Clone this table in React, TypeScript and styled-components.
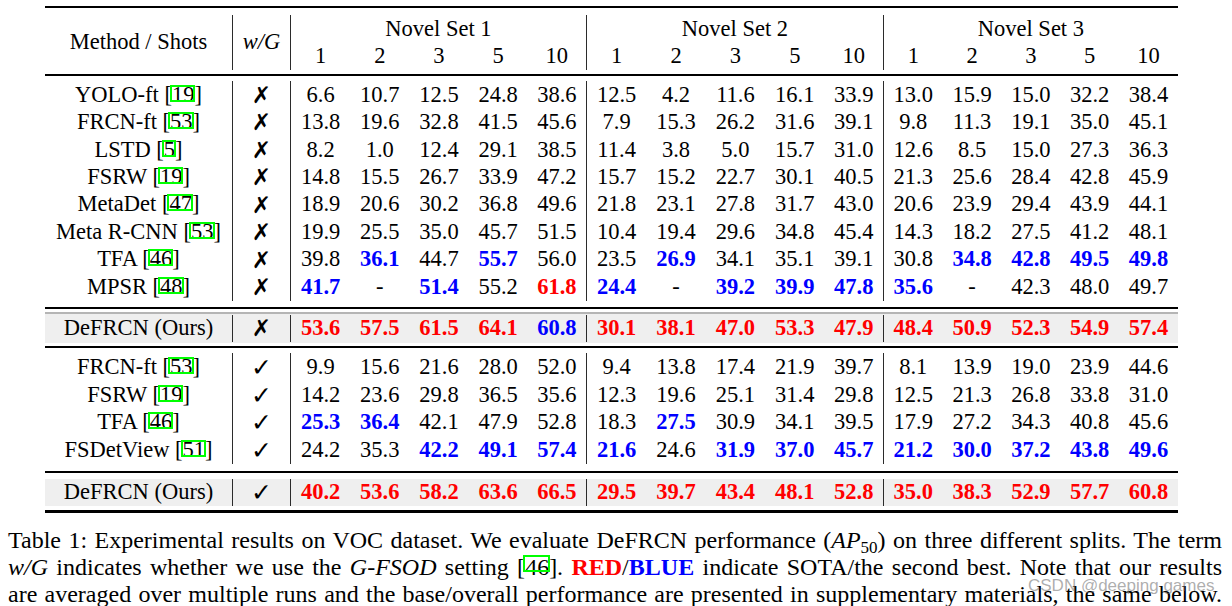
import React from 'react';
import styled, {createGlobalStyle} from 'styled-components';

// column widths measured off the reference (method, w/G, 3 x 5 shot columns)
const COLS = '188px 58px repeat(5, 59.2px) repeat(5, 59.4px) repeat(5, 58.8px)';
const SEP_AFTER = [0, 1, 6, 11];

type Row = {
    name: string;
    cite?: string;
    g: boolean;
    v: string[];
};

// values: leading "r" = best (red), "b" = second best (blue)
const group1: Row[] = [
    {name: 'YOLO-ft', cite: '19', g: false, v: ['6.6', '10.7', '12.5', '24.8', '38.6', '12.5', '4.2', '11.6', '16.1', '33.9', '13.0', '15.9', '15.0', '32.2', '38.4']},
    {name: 'FRCN-ft', cite: '53', g: false, v: ['13.8', '19.6', '32.8', '41.5', '45.6', '7.9', '15.3', '26.2', '31.6', '39.1', '9.8', '11.3', '19.1', '35.0', '45.1']},
    {name: 'LSTD', cite: '5', g: false, v: ['8.2', '1.0', '12.4', '29.1', '38.5', '11.4', '3.8', '5.0', '15.7', '31.0', '12.6', '8.5', '15.0', '27.3', '36.3']},
    {name: 'FSRW', cite: '19', g: false, v: ['14.8', '15.5', '26.7', '33.9', '47.2', '15.7', '15.2', '22.7', '30.1', '40.5', '21.3', '25.6', '28.4', '42.8', '45.9']},
    {name: 'MetaDet', cite: '47', g: false, v: ['18.9', '20.6', '30.2', '36.8', '49.6', '21.8', '23.1', '27.8', '31.7', '43.0', '20.6', '23.9', '29.4', '43.9', '44.1']},
    {name: 'Meta R-CNN', cite: '53', g: false, v: ['19.9', '25.5', '35.0', '45.7', '51.5', '10.4', '19.4', '29.6', '34.8', '45.4', '14.3', '18.2', '27.5', '41.2', '48.1']},
    {name: 'TFA', cite: '46', g: false, v: ['39.8', 'b36.1', '44.7', 'b55.7', '56.0', '23.5', 'b26.9', '34.1', '35.1', '39.1', '30.8', 'b34.8', 'b42.8', 'b49.5', 'b49.8']},
    {name: 'MPSR', cite: '48', g: false, v: ['b41.7', '-', 'b51.4', '55.2', 'r61.8', 'b24.4', '-', 'b39.2', 'b39.9', 'b47.8', 'b35.6', '-', '42.3', '48.0', '49.7']},
];

const ours1: Row = {name: 'DeFRCN (Ours)', g: false, v: ['r53.6', 'r57.5', 'r61.5', 'r64.1', 'b60.8', 'r30.1', 'r38.1', 'r47.0', 'r53.3', 'r47.9', 'r48.4', 'r50.9', 'r52.3', 'r54.9', 'r57.4']};

const group2: Row[] = [
    {name: 'FRCN-ft', cite: '53', g: true, v: ['9.9', '15.6', '21.6', '28.0', '52.0', '9.4', '13.8', '17.4', '21.9', '39.7', '8.1', '13.9', '19.0', '23.9', '44.6']},
    {name: 'FSRW', cite: '19', g: true, v: ['14.2', '23.6', '29.8', '36.5', '35.6', '12.3', '19.6', '25.1', '31.4', '29.8', '12.5', '21.3', '26.8', '33.8', '31.0']},
    {name: 'TFA', cite: '46', g: true, v: ['b25.3', 'b36.4', '42.1', '47.9', '52.8', '18.3', 'b27.5', '30.9', '34.1', '39.5', '17.9', '27.2', '34.3', '40.8', '45.6']},
    {name: 'FSDetView', cite: '51', g: true, v: ['24.2', '35.3', 'b42.2', 'b49.1', 'b57.4', 'b21.6', '24.6', 'b31.9', 'b37.0', 'b45.7', 'b21.2', 'b30.0', 'b37.2', 'b43.8', 'b49.6']},
];

const ours2: Row = {name: 'DeFRCN (Ours)', g: true, v: ['r40.2', 'r53.6', 'r58.2', 'r63.6', 'r66.5', 'r29.5', 'r39.7', 'r43.4', 'r48.1', 'r52.8', 'r35.0', 'r38.3', 'r52.9', 'r57.7', 'r60.8']};

const shots = ['1', '2', '3', '5', '10'];

const App: React.FC = () => {
    const renderRow = (row: Row, key: React.Key) => (
        <React.Fragment key={key}>
            <Cell $sep>
                {row.name}
                {row.cite && <>{' ['}<Cite>{row.cite}</Cite>]</>}
            </Cell>
            <Mark $sep $check={row.g}>{row.g ? '\u2713' : '\u2717'}</Mark>
            {row.v.map((raw, i) => {
                const tone = raw[0] === 'r' || raw[0] === 'b' ? raw[0] : undefined;
                const text = tone ? raw.slice(1) : raw;
                return (
                    <Cell key={i} $sep={SEP_AFTER.includes(i + 2)} $tone={tone}>
                        {text}
                    </Cell>
                );
            })}
        </React.Fragment>
    );

    return (
        <Page>
            <GlobalStyle/>
            <TableWrap>
                <Rule $h={2}/>
                <Head>
                    <Grid $rowH={27.5}>
                        <HeadCell $sep $span={2}>Method / Shots</HeadCell>
                        <HeadCell $sep $span={2}><i>w/G</i></HeadCell>
                        {[1, 2, 3].map(n => (
                            <SetTitle key={n} $sep={n < 3}>Novel Set {n}</SetTitle>
                        ))}
                        {[0, 1, 2].map(s => shots.map((shot, i) => (
                            <Cell key={`${s}-${shot}`} $sep={s < 2 && i === 4}>{shot}</Cell>
                        )))}
                    </Grid>
                </Head>
                <Rule $h={2}/>

                <Body $pt={5.3} $pb={6.8}>
                    <Grid $rowH={27.43}>{group1.map(renderRow)}</Grid>
                </Body>
                <Rule $h={2}/>
                <Rule $h={1.5} $gap={3} $color="#b5b5b5"/>
                <Shaded $pt={1} $pb={1}>
                    <Grid $rowH={27}>{renderRow(ours1, 'o1')}</Grid>
                </Shaded>
                <Rule $h={2.5} $gap={3}/>

                <Body $pt={5} $pb={6.8}>
                    <Grid $rowH={27.6}>{group2.map(renderRow)}</Grid>
                </Body>
                <Rule $h={2}/>
                <Shaded $pt={0} $pb={0} $gap={6}>
                    <Grid $rowH={27}>{renderRow(ours2, 'o2')}</Grid>
                </Shaded>
                <Rule $h={3} $gap={4}/>
            </TableWrap>

            <Caption>
                <CapLine>
                    Table 1: Experimental results on VOC dataset. We evaluate DeFRCN performance (<i>AP</i><Sub>50</Sub>) on three different splits. The term
                </CapLine>
                <CapLine>
                    <i>w/G</i> indicates whether we use the <i>G-FSOD</i> setting [<Cite>46</Cite>]. <Red>RED</Red>/<Blue>BLUE</Blue> indicate SOTA/the second best. Note that our results
                </CapLine>
                <CapLine>
                    are averaged over multiple runs and the base/overall performance are presented in supplementary materials, the same below.
                </CapLine>
            </Caption>

            <Watermark>CSDN @deeping games</Watermark>
        </Page>
    );
};

const GlobalStyle = createGlobalStyle`
  html, body {
    margin: 0;
    padding: 0;
    background: #fff;
  }

  body {
    font-family: "Liberation Serif", "Times New Roman", serif;
    color: #000;
  }
`

const Page = styled.div`
  position: relative;
  width: 1232px;
  height: 606px;
  padding-top: 6px;
  box-sizing: border-box;
  overflow: hidden;
`

const TableWrap = styled.div`
  margin-left: 45px;
  width: 1133px;
  font-size: 22.5px;
  line-height: 1;
`

const Rule = styled.div<{ $h: number; $gap?: number; $color?: string }>`
  height: ${p => p.$h}px;
  margin-top: ${p => p.$gap || 0}px;
  background: ${p => p.$color || '#000'};
`

const Grid = styled.div<{ $rowH: number }>`
  display: grid;
  grid-template-columns: ${COLS};
  grid-auto-rows: ${p => p.$rowH}px;
`

const Head = styled.div`
  padding: 7px 0 4px;
`

const Body = styled.div<{ $pt: number; $pb: number }>`
  padding: ${p => p.$pt}px 0 ${p => p.$pb}px;
`

const Shaded = styled.div<{ $pt: number; $pb: number; $gap?: number }>`
  margin-top: ${p => p.$gap || 0}px;
  padding: ${p => p.$pt}px 0 ${p => p.$pb}px;
  background: #efefef;
`

const Cell = styled.div<{ $sep?: boolean; $tone?: string }>`
  display: flex;
  align-items: center;
  justify-content: center;
  white-space: nowrap;
  border-right: ${p => (p.$sep ? '1.5px solid #2b2b2b' : 'none')};
  color: ${p => (p.$tone === 'r' ? '#ff0000' : p.$tone === 'b' ? '#0000ff' : '#000')};
  font-weight: ${p => (p.$tone ? 700 : 400)};
`

const HeadCell = styled(Cell)<{ $span: number }>`
  grid-row: span ${p => p.$span};
`

const SetTitle = styled(Cell)`
  grid-column: span 5;
`

const Mark = styled(Cell)<{ $check: boolean }>`
  font-family: "DejaVu Sans", sans-serif;
  font-size: ${p => (p.$check ? 25 : 23)}px;
  font-weight: 700;
  padding-top: 1px;
`

const Cite = styled.span`
  position: relative;

  &::after {
    content: '';
    position: absolute;
    left: -2px;
    right: -1px;
    top: 1px;
    height: 17px;
    border: 2px solid #00ff00;
    box-sizing: border-box;
  }
`

const Caption = styled.div`
  margin: 14.5px 0 0 8px;
  width: 1214px;
  font-size: 24px;
  line-height: 27px;
`

const CapLine = styled.div`
  height: 27px;
  text-align: justify;
  text-align-last: justify;
  white-space: nowrap;
`

const Sub = styled.span`
  position: relative;
  top: 5px;
  font-size: 17px;
  line-height: 0;
`

const Red = styled.b`
  color: #ff0000;
`

const Blue = styled.b`
  color: #0000ff;
`

const Watermark = styled.div`
  position: absolute;
  left: 1028px;
  top: 576px;
  font-family: "Liberation Sans", Arial, sans-serif;
  font-size: 17px;
  color: rgba(105, 105, 105, 0.55);
  pointer-events: none;
`

export default App;
